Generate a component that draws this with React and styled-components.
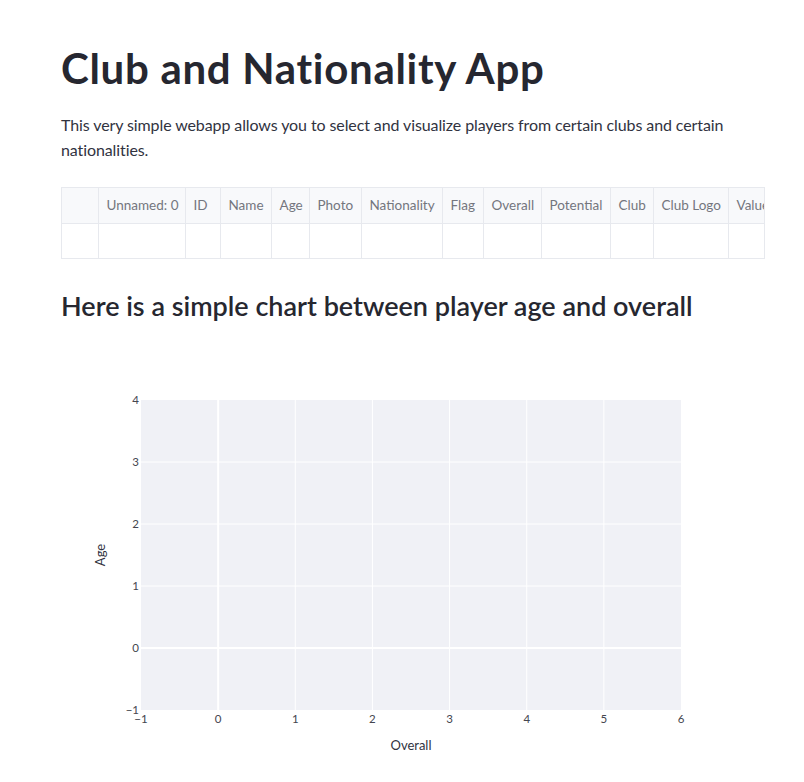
import React from "react";
import styled, { createGlobalStyle } from "styled-components";

const GlobalStyle = createGlobalStyle`
  html, body {
    margin: 0;
    padding: 0;
    background: #ffffff;
  }
  body {
    font-family: Lato, "Noto Sans", sans-serif;
    color: #31333f;
  }
`;

const columns = [
  { label: "", width: 36 },
  { label: "Unnamed: 0", width: 87 },
  { label: "ID", width: 35 },
  { label: "Name", width: 51 },
  { label: "Age", width: 38 },
  { label: "Photo", width: 52 },
  { label: "Nationality", width: 81 },
  { label: "Flag", width: 41 },
  { label: "Overall", width: 58 },
  { label: "Potential", width: 69 },
  { label: "Club", width: 43 },
  { label: "Club Logo", width: 75 },
  { label: "Value", width: 60 },
];

// plot area inside the chart svg
const PLOT = { left: 80, top: 61, width: 540, height: 310 };
const xTicks = [-1, 0, 1, 2, 3, 4, 5, 6];
const yTicks = [-1, 0, 1, 2, 3, 4];

const fmt = (n) => (n < 0 ? `\u2212${Math.abs(n)}` : `${n}`);
const xPos = (v) => PLOT.left + ((v + 1) / 7) * PLOT.width;
const yPos = (v) => PLOT.top + PLOT.height - ((v + 1) / 5) * PLOT.height;

export default function App() {
  return (
    <>
      <GlobalStyle />
      <Main>
        <Title>Club and Nationality App</Title>
        <Intro>
          This very simple webapp allows you to select and visualize players
          from certain clubs and certain nationalities.
        </Intro>
        <TableFrame>
          <Table>
            <colgroup>
              {columns.map((c, i) => (
                <col key={i} style={{ width: c.width }} />
              ))}
            </colgroup>
            <thead>
              <tr>
                {columns.map((c, i) => (
                  <HeadCell key={i}>{c.label}</HeadCell>
                ))}
              </tr>
            </thead>
            <tbody>
              <tr>
                {columns.map((c, i) => (
                  <BodyCell key={i} />
                ))}
              </tr>
            </tbody>
          </Table>
        </TableFrame>
        <Subtitle>Here is a simple chart between player age and overall</Subtitle>
        <Chart width="703" height="430" viewBox="0 0 703 430">
          <rect
            x={PLOT.left}
            y={PLOT.top}
            width={PLOT.width}
            height={PLOT.height}
            fill="#f0f1f6"
          />
          {xTicks.slice(1, -1).map((t) => (
            <line
              key={`gx${t}`}
              x1={xPos(t)}
              x2={xPos(t)}
              y1={PLOT.top}
              y2={PLOT.top + PLOT.height}
              stroke="#ffffff"
              strokeWidth={t === 0 ? 2 : 1}
            />
          ))}
          {yTicks.slice(1, -1).map((t) => (
            <line
              key={`gy${t}`}
              x1={PLOT.left}
              x2={PLOT.left + PLOT.width}
              y1={yPos(t)}
              y2={yPos(t)}
              stroke="#ffffff"
              strokeWidth={t === 0 ? 2 : 1}
            />
          ))}
          {xTicks.map((t) => (
            <TickText key={`tx${t}`} x={xPos(t)} y={PLOT.top + PLOT.height + 13} textAnchor="middle">
              {fmt(t)}
            </TickText>
          ))}
          {yTicks.map((t) => (
            <TickText key={`ty${t}`} x={PLOT.left - 2} y={yPos(t) + 4} textAnchor="end">
              {fmt(t)}
            </TickText>
          ))}
          <AxisTitle x={PLOT.left + PLOT.width / 2} y={411} textAnchor="middle">
            Overall
          </AxisTitle>
          <AxisTitle
            x={0}
            y={0}
            textAnchor="middle"
            transform={`translate(44 ${PLOT.top + PLOT.height / 2}) rotate(-90)`}
          >
            Age
          </AxisTitle>
        </Chart>
      </Main>
    </>
  );
}

const Main = styled.main`
  width: 703px;
  margin-left: 61px;
  padding-top: 42px;
  display: flex;
  flex-direction: column;
`;

const Title = styled.h1`
  margin: 0;
  font-size: 42px;
  line-height: 53px;
  font-weight: 700;
  color: #262730;
  letter-spacing: 0.7px;
`;

const Intro = styled.p`
  margin: 17px 0 0;
  font-size: 16px;
  line-height: 25px;
  color: #31333f;
  letter-spacing: -0.1px;
`;

const TableFrame = styled.div`
  margin-top: 25px;
  width: 704px;
  overflow: hidden;
  border: 1px solid #e7e9ee;
  box-sizing: border-box;
`;

const Table = styled.table`
  border-collapse: collapse;
  table-layout: fixed;
  width: 726px;
`;

const HeadCell = styled.th`
  height: 35px;
  padding: 0 8px;
  background: #f8f9fb;
  border-right: 1px solid #e7e9ee;
  border-bottom: 1px solid #e7e9ee;
  font-size: 13.5px;
  font-weight: 400;
  color: #74767e;
  text-align: left;
  white-space: nowrap;
  overflow: hidden;
  box-sizing: border-box;
`;

const BodyCell = styled.td`
  height: 35px;
  padding: 0;
  border-right: 1px solid #e7e9ee;
  box-sizing: border-box;
`;

const Subtitle = styled.h2`
  margin: 30px 0 0;
  font-size: 27px;
  line-height: 34px;
  font-weight: 600;
  color: #262730;
`;

const Chart = styled.svg`
  display: block;
  margin-top: 16px;
`;

const TickText = styled.text`
  font-family: Lato, "Noto Sans", sans-serif;
  font-size: 11.5px;
  fill: #44464f;
`;

const AxisTitle = styled.text`
  font-family: Lato, "Noto Sans", sans-serif;
  font-size: 13px;
  fill: #31333f;
`;
